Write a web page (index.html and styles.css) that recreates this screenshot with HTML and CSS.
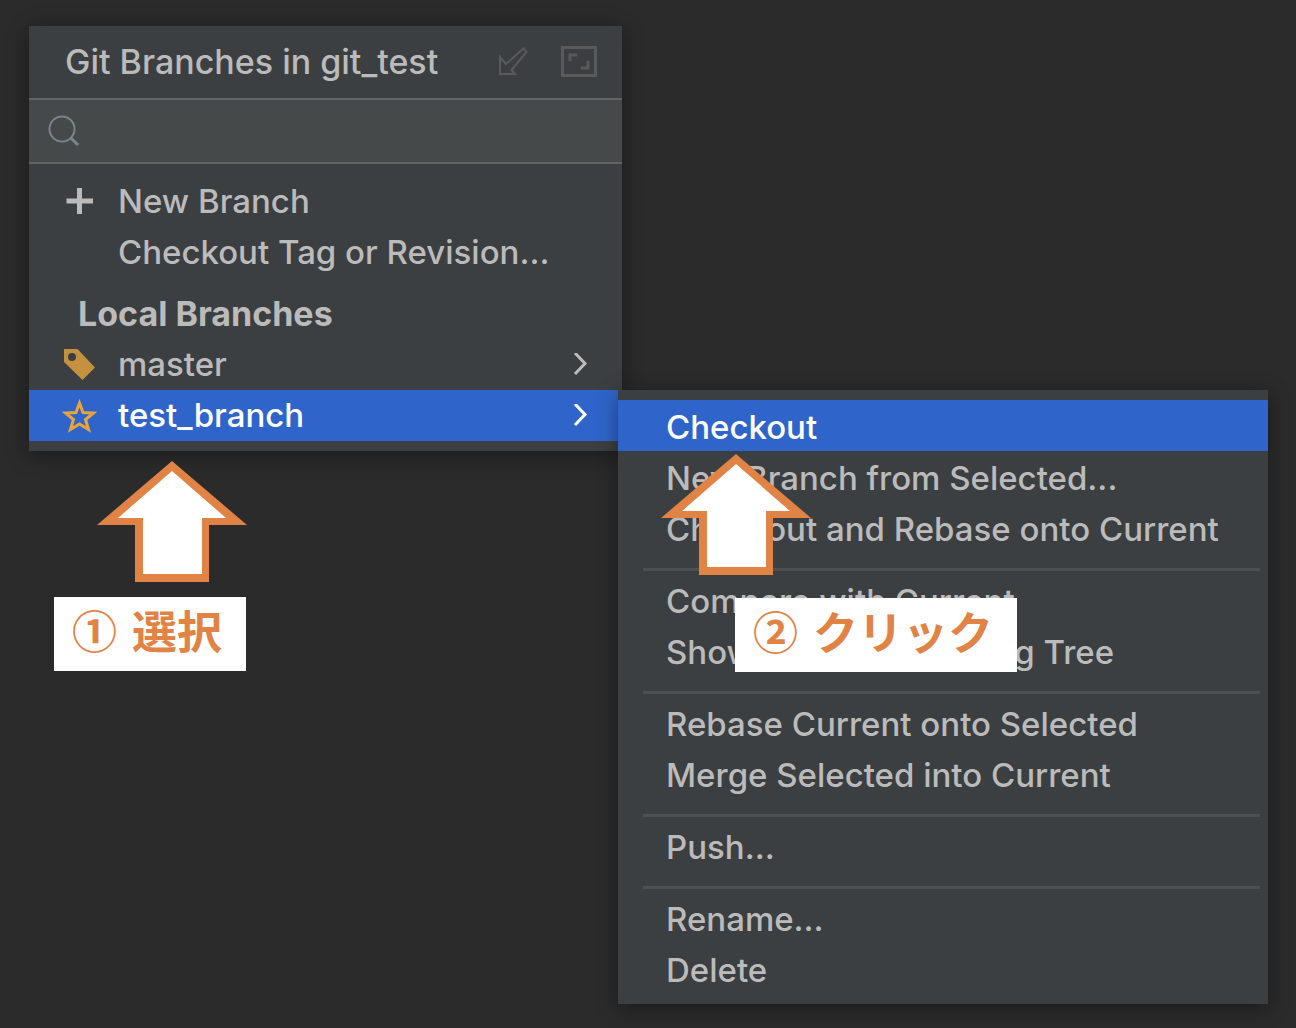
FILE: index.html
```html
<!DOCTYPE html>
<html lang="ja">
<head>
<meta charset="utf-8">
<meta name="viewport" content="width=device-width, initial-scale=1">
<title>Git Branches in git_test</title>
<link rel="stylesheet" href="styles.css">
</head>
<body>
<main class="stage">
  <div class="branches">
    <section class="popup" aria-labelledby="popup-title">
      <header class="popup-header">
        <h1 class="popup-title" id="popup-title">Git Branches in git_test</h1>
        <button class="icon-button" type="button" aria-label="Restore size">
          <svg width="36" height="36" viewBox="0 0 36 36" fill="none" stroke="#595a59" stroke-width="2"><path d="M5 14V31H20L16.500 27L31.500 9L28.500 5.500L11 21Z"/></svg>
        </button>
        <button class="icon-button" type="button" aria-label="Fit to content">
          <svg width="36" height="36" viewBox="0 0 36 36" fill="none" stroke="#595a59"><path d="M1.500 4.500H34.500V32.500H1.500Z" stroke-width="3"/><path d="M9 18V12H16M27 18V25H20" stroke-width="3"/></svg>
        </button>
      </header>
      <label class="search">
        <svg width="36" height="36" viewBox="0 0 36 36" fill="none" stroke="#7a858e"><circle cx="15" cy="16" r="12.500" stroke-width="2"/><path d="M23.500 24.500L31 32" stroke-width="3"/></svg>
        <input class="search-input" type="text" aria-label="Search branches">
      </label>
      <div class="branch-list">
        <button class="row" type="button">
          <svg class="row-icon" width="36" height="36" viewBox="0 0 36 36" fill="none" stroke="#bbb" stroke-width="5"><path d="M4.500 17H31M17.500 4V30"/></svg>
          <span>New Branch</span>
        </button>
        <button class="row row-plain" type="button"><span>Checkout Tag or Revision...</span></button>
        <h2 class="group-title">Local Branches</h2>
        <button class="row" type="button">
          <svg class="row-icon" width="36" height="36" viewBox="0 0 36 36"><path fill="#c49140" fill-rule="evenodd" d="M2 2H15.500L33 20.500L20.500 33L2 15ZM10 6A4 4 0 1 0 10 14A4 4 0 1 0 10 6Z"/></svg>
          <span>master</span>
          <svg class="chevron" width="16" height="24" viewBox="0 0 16 24" fill="none" stroke="currentColor" stroke-width="3"><path d="M2 0L12 10.500L2 21"/></svg>
        </button>
        <button class="row selected" type="button" aria-expanded="true">
          <svg class="row-icon" width="36" height="36" viewBox="0 0 36 36" fill="none" stroke="#e9a53a" stroke-width="3"><path d="M17.500 5L21 14.500L31.500 15L23.500 21.500L26.500 31.500L17.500 26L8.500 31.500L11.500 21.500L3.500 15L14 14.500Z"/></svg>
          <span>test_branch</span>
          <svg class="chevron" width="16" height="24" viewBox="0 0 16 24" fill="none" stroke="currentColor" stroke-width="3"><path d="M2 0L12 10.500L2 21"/></svg>
        </button>
      </div>
    </section>
    <div class="step step-one">
      <svg class="arrow" width="150" height="121" viewBox="0 0 150 121"><path fill="#e08344" d="M75 0L150 64H112V121H38V64H0Z"/><path fill="#fff" d="M75 10L129 57H105V113H46V57H21Z"/></svg>
      <p class="caption"><span>①</span><span>選択</span></p>
    </div>
  </div>
  <div class="actions">
    <nav class="submenu" aria-label="test_branch">
      <button class="action selected" type="button">Checkout</button>
      <button class="action" type="button">New Branch from Selected...</button>
      <button class="action" type="button">Checkout and Rebase onto Current</button>
      <hr class="divider">
      <button class="action" type="button">Compare with Current</button>
      <button class="action" type="button">Show Diff with Working Tree</button>
      <hr class="divider">
      <button class="action" type="button">Rebase Current onto Selected</button>
      <button class="action" type="button">Merge Selected into Current</button>
      <hr class="divider">
      <button class="action" type="button">Push...</button>
      <hr class="divider">
      <button class="action" type="button">Rename...</button>
      <button class="action" type="button">Delete</button>
    </nav>
    <div class="step step-two">
      <svg class="arrow" width="150" height="121" viewBox="0 0 150 121"><path fill="#e08344" d="M75 0L150 64H112V121H38V64H0Z"/><path fill="#fff" d="M75 10L129 57H105V113H46V57H21Z"/></svg>
      <p class="caption"><span>②</span><span>クリック</span></p>
    </div>
  </div>
</main>
</body>
</html>
```
FILE: styles.css
```css
* {
  box-sizing: border-box;
}

body {
  margin: 0;
  min-height: 100vh;
  background: #2b2b2b;
  color: #bbb;
  font-family: Inter, "Noto Sans CJK JP", sans-serif;
  font-size: 33px;
  font-weight: 450;
}

h1, h2, p {
  margin: 0;
}

button {
  border: 0;
  padding: 0;
  background: none;
  color: inherit;
  font: inherit;
  text-align: left;
  white-space: nowrap;
}

svg {
  display: block;
  flex: none;
}

.stage {
  display: grid;
  grid-template-columns: minmax(0, 593fr) minmax(0, 646fr);
  align-items: start;
  padding: 26px 28px 24px 29px;
}

.popup, .submenu {
  background: #3c3f41;
  box-shadow: 0 4px 20px rgba(0, 0, 0, 0.4);
}

.popup {
  padding-bottom: 10px;
}

.popup-header {
  display: flex;
  align-items: center;
  gap: 30px;
  height: 72px;
  padding: 0 25px 2px 36px;
}

.popup-title {
  flex: 1;
  font-size: 34px;
  font-weight: 450;
  line-height: 51px;
  white-space: nowrap;
}

.search {
  display: flex;
  align-items: center;
  gap: 16px;
  height: 66px;
  padding: 0 18px;
  border-top: 2px solid #616364;
  border-bottom: 2px solid #616364;
  background: #45494a;
}

.search-input {
  flex: 1;
  min-width: 0;
  border: 0;
  outline: 0;
  background: none;
  color: inherit;
  font: inherit;
}

.branch-list {
  padding-top: 12px;
}

.row {
  display: flex;
  align-items: center;
  gap: 20px;
  width: 100%;
  height: 51px;
  padding: 0 33px;
  line-height: 51px;
}

.row-plain {
  padding-left: 89px;
}

.chevron {
  margin-left: auto;
}

.group-title {
  margin-top: 10px;
  padding-left: 49px;
  font-size: 34px;
  font-weight: 700;
  line-height: 51px;
}

.selected {
  background: #2f65ca;
  color: #fff;
  font-weight: 500;
}

.actions {
  position: relative;
  margin: 364px 0 0 -4px;
}

.submenu {
  padding: 10px 0;
}

.action {
  display: block;
  width: 100%;
  height: 51px;
  padding-left: 48px;
  line-height: 54px;
}

.divider {
  height: 3px;
  margin: 15px 8px 3px 25px;
  border: 0;
  background: #4d4f50;
}

.step {
  display: flex;
  flex-direction: column;
  align-items: flex-start;
}

.step-one {
  gap: 15px;
  padding: 10px 0 0 25px;
}

.step-one .arrow {
  margin-left: 43px;
}

.step-two {
  position: absolute;
  top: 64px;
  left: 43px;
  gap: 23px;
}

.step-two .caption {
  margin-left: 74px;
}

.caption {
  display: flex;
  gap: 15px;
  height: 74px;
  padding: 0 24px 0 18px;
  background: #fff;
  color: #e08344;
  font-family: "Noto Sans CJK JP", sans-serif;
  font-size: 45px;
  font-weight: 700;
  line-height: 65px;
  white-space: nowrap;
}
```
